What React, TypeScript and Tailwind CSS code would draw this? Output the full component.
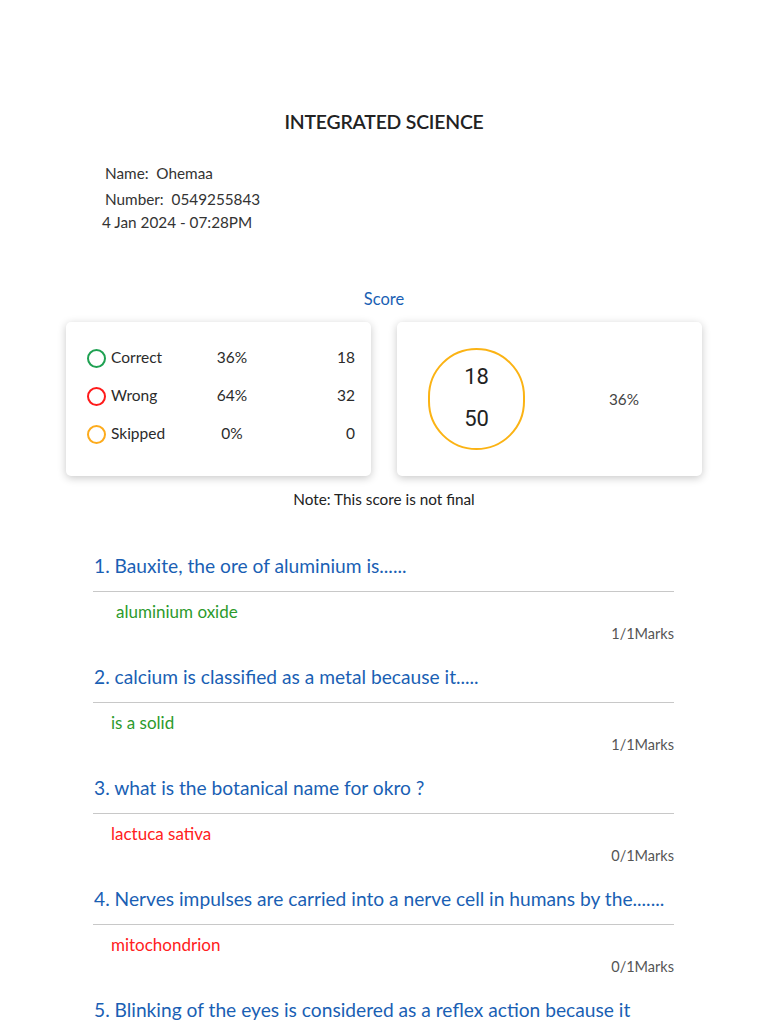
const questions = [
  { q: "1. Bauxite, the ore of aluminium is......", a: "aluminium oxide", ok: true, marks: "1/1Marks", indent: "pl-[23px]" },
  { q: "2. calcium is classified as a metal because it.....", a: "is a solid", ok: true, marks: "1/1Marks", indent: "pl-[18px]" },
  { q: "3. what is the botanical name for okro ?", a: "lactuca sativa", ok: false, marks: "0/1Marks", indent: "pl-[18px]" },
  { q: "4. Nerves impulses are carried into a nerve cell in humans by the.......", a: "mitochondrion", ok: false, marks: "0/1Marks", indent: "pl-[18px]" },
];

const stats = [
  { label: "Correct", pct: "36%", n: "18", ring: "border-[#1fa152]" },
  { label: "Wrong", pct: "64%", n: "32", ring: "border-[#ff1a1a]" },
  { label: "Skipped", pct: "0%", n: "0", ring: "border-[#fdab1c]" },
];

export default function App() {
  return (
    <div className="min-h-[1024px] h-[1024px] overflow-hidden bg-white font-['Lato','Noto_Sans',sans-serif] text-[#2b2b2b]">
      <h1 className="pt-[110px] text-center text-[19.4px] font-semibold leading-6 tracking-[-0.2px] text-[#222]">
        INTEGRATED SCIENCE
      </h1>

      {/* student details */}
      <div className="mt-[29px] pl-[104px] text-[15.3px] leading-[20px] text-[#333]">
        <p className="pl-px">Name:&nbsp; Ohemaa</p>
        <p className="mt-[6px] pl-px">Number:&nbsp; 0549255843</p>
        <p className="-ml-[2px] mt-[3px]">4 Jan 2024 - 07:28PM</p>
      </div>

      <p className="mt-[55px] text-center text-[16.5px] leading-6 text-[#1a5fb4]">Score</p>

      <div className="mt-[11px] flex gap-[26px] px-[66px]">
        <div className="flex h-[154px] w-[305px] flex-col gap-[16px] rounded-[5px] bg-white pl-[21px] pr-[16px] pt-[25px] shadow-[0_2px_8px_rgba(0,0,0,0.22)]">
          {stats.map((s) => (
            <div key={s.label} className="flex h-[22px] items-center text-[15.5px]">
              <span className={`mr-[5px] h-[19px] w-[19px] shrink-0 rounded-full border-[2.5px] ${s.ring}`} />
              <span className="w-[95px]">{s.label}</span>
              <span className="w-[52px] text-center">{s.pct}</span>
              <span className="flex-1 text-right">{s.n}</span>
            </div>
          ))}
        </div>

        <div className="flex h-[154px] w-[305px] items-center rounded-[5px] bg-white pl-[31px] shadow-[0_2px_8px_rgba(0,0,0,0.22)]">
          <div className="flex h-[102px] w-[97px] flex-col items-center justify-center gap-[18px] rounded-full border-2 border-[#fbb314] pb-[2px] font-['Roboto',sans-serif] text-[22px] leading-6 text-[#222]">
            <span>18</span>
            <span>50</span>
          </div>
          <span className="ml-[84px] text-[15.3px] text-[#444]">36%</span>
        </div>
      </div>

      <p className="mt-[13px] text-center text-[15.3px] leading-5 text-[#222]">Note: This score is not final</p>

      {/* answers */}
      <div className="mt-[45px] pl-[93px] pr-[94px]">
        {questions.map((item) => (
          <div key={item.q} className="h-[111px]">
            <p className="pl-px text-[19.2px] leading-[24px] text-[#1a5fb4] whitespace-nowrap">{item.q}</p>
            <div className="mt-[13px] h-px bg-[#c8c8c8]" />
            <p className={`mt-[9px] text-[17px] leading-[22px] ${item.indent} ${item.ok ? "text-[#2c9a2c]" : "text-[#ff2020]"}`}>
              {item.a}
            </p>
            <p className="mt-[1px] text-right text-[14.5px] leading-5 text-[#555]">{item.marks}</p>
          </div>
        ))}
        <p className="pl-px text-[19.2px] leading-[24px] text-[#1a5fb4] whitespace-nowrap">
          5. Blinking of the eyes is considered as a reflex action because it
        </p>
      </div>
    </div>
  );
}
